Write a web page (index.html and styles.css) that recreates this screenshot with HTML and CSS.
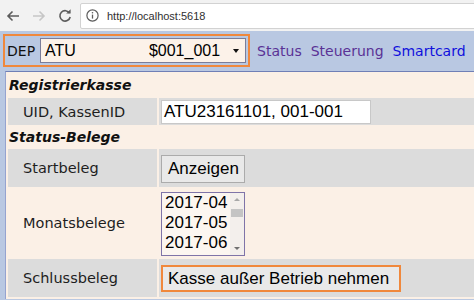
FILE: index.html
```
<!DOCTYPE html>
<html lang="de">
<head>
<meta charset="utf-8">
<title>Registrierkasse</title>
<link rel="stylesheet" href="styles.css">
</head>
<body>
<div class="chrome">
  <div class="cbtn">
    <svg width="14" height="12" viewBox="0 0 14 12"><path d="M13 6H2M6.5 1.5L2 6l4.5 4.5" fill="none" stroke="#5c5c5c" stroke-width="1.6"/></svg>
  </div>
  <div class="cbtn">
    <svg width="14" height="12" viewBox="0 0 14 12"><path d="M1 6h11M7.5 1.5L12 6l-4.5 4.5" fill="none" stroke="#c6c6c6" stroke-width="1.6"/></svg>
  </div>
  <div class="cbtn">
    <svg width="14" height="14" viewBox="0 0 14 14"><path d="M11.6 4.2A5.2 5.2 0 1 0 12.2 8" fill="none" stroke="#5c5c5c" stroke-width="1.6"/><path d="M8.2 4.6h4.4V0.2z" fill="#5c5c5c"/></svg>
  </div>
  <div class="omni">
    <svg width="13" height="13" viewBox="0 0 13 13"><circle cx="6.5" cy="6.5" r="5.6" fill="none" stroke="#5c5c5c" stroke-width="1.2"/><path d="M6.5 5.6v4" stroke="#5c5c5c" stroke-width="1.3"/><circle cx="6.5" cy="3.8" r="0.8" fill="#5c5c5c"/></svg>
    <span class="url">http://localhost:5618</span>
  </div>
</div>
<div class="nav">
  <div class="dep-box">
    <span class="dep">DEP</span>
    <div class="select">
      <span>ATU</span>
      <span class="sel-right">$001_001<span class="arrow"></span></span>
    </div>
  </div>
  <div class="links">
    <a class="link visited" href="#">Status</a>
    <a class="link visited" href="#">Steuerung</a>
    <a class="link" href="#">Smartcard</a>
  </div>
</div>
<div class="panel">
  <table class="grid">
    <tr class="sec first"><th colspan="2">Registrierkasse</th></tr>
    <tr class="gray r-uid">
      <td class="label">UID, KassenID</td>
      <td class="value"><div class="input">ATU23161101, 001-001</div></td>
    </tr>
    <tr class="sec second"><th colspan="2">Status-Belege</th></tr>
    <tr class="gray r-btn">
      <td class="label">Startbeleg</td>
      <td class="value"><div class="button btn-show">Anzeigen</div></td>
    </tr>
    <tr class="r-list">
      <td class="label">Monatsbelege</td>
      <td class="value">
        <div class="listbox">
          <div class="items">
            <div class="item">2017-04</div>
            <div class="item">2017-05</div>
            <div class="item">2017-06</div>
          </div>
          <div class="sbar">
            <span class="sb-up"></span>
            <span class="sb-thumb"></span>
            <span class="sb-down"></span>
          </div>
        </div>
      </td>
    </tr>
    <tr class="gray r-close">
      <td class="label">Schlussbeleg</td>
      <td class="value"><div class="button btn-close">Kasse außer Betrieb nehmen</div></td>
    </tr>
  </table>
</div>
</body>
</html>
```
FILE: styles.css
```
html, body {
  margin: 0;
  padding: 0;
  overflow: hidden;
}
body {
  width: 474px;
  height: 300px;
  background: #b9c8e2;
  font-family: "DejaVu Sans", Verdana, sans-serif;
  color: #1a1a1a;
}

/* browser chrome */
.chrome {
  height: 31px;
  background: #f2f2f2;
  display: flex;
  align-items: center;
}
.cbtn {
  width: 26px;
  height: 26px;
  display: flex;
  align-items: center;
  justify-content: center;
  flex: none;
}
.omni {
  margin-left: 2px;
  margin-right: -6px;
  flex: 1;
  height: 26px;
  box-sizing: border-box;
  background: #fff;
  border: 1px solid #d2d2d2;
  border-radius: 2px;
  display: flex;
  align-items: center;
  padding-left: 5px;
  gap: 8px;
}
.url {
  font-family: "Liberation Sans", Arial, sans-serif;
  font-size: 11px;
  color: #303030;
}

/* navigation */
.nav {
  height: 40px;
  box-sizing: border-box;
  padding: 3px 0 0 3px;
  display: flex;
  align-items: flex-start;
}
.dep-box {
  border: 2px solid #f0883c;
  padding: 2px;
  display: flex;
  align-items: center;
  gap: 5px;
}
.dep {
  font-size: 14px;
  color: #111;
}
.select {
  width: 206px;
  height: 25px;
  box-sizing: border-box;
  border: 1px solid #7b7d99;
  background: #fcf2e9;
  display: flex;
  align-items: center;
  justify-content: space-between;
  padding: 0 6px 0 4px;
  font-family: "Liberation Sans", Arial, sans-serif;
  font-size: 16px;
  color: #000;
}
.sel-right {
  display: flex;
  align-items: center;
}
.arrow {
  margin-left: 13px;
  width: 0;
  height: 0;
  border-left: 3px solid transparent;
  border-right: 3px solid transparent;
  border-top: 4px solid #111;
}
.links {
  display: flex;
  gap: 9px;
  margin-left: 7px;
  line-height: 34px;
}
.link {
  font-size: 14px;
  text-decoration: none;
  color: #1010dd;
}
.link.visited {
  color: #5a3296;
}

/* content panel */
.panel {
  margin-left: 5px;
  border-left: 1px solid #95a3cf;
  border-top: 1px solid #6f7fb6;
  background: #fbf0e6;
  width: 480px;
}
.grid {
  border-collapse: separate;
  border-spacing: 2px;
  width: 480px;
}
.grid td, .grid th {
  padding: 0;
}
.sec th {
  text-align: left;
  font-weight: bold;
  font-style: italic;
  font-size: 14px;
  color: #111;
  padding-left: 1px;
}
.sec.first th { height: 22px; }
.sec.second th { height: 20px; }
.gray td {
  background: #dcdcdc;
}
.label {
  width: 149px;
  box-sizing: border-box;
  padding-left: 15px !important;
  font-size: 14.5px;
  color: #1e1e1e;
  vertical-align: middle;
}
.value {
  padding-left: 2px !important;
  vertical-align: middle;
}
.r-uid td { height: 27px; }
.r-btn td { height: 38px; }
.r-list td { height: 68px; }
.r-close td { height: 38px; }

.input {
  width: 210px;
  height: 24px;
  box-sizing: border-box;
  background: #fff;
  border: 1px solid #c8c8c8;
  font-family: "Liberation Sans", Arial, sans-serif;
  font-size: 17px;
  line-height: 22px;
  padding-left: 2px;
  color: #000;
}
.button {
  box-sizing: border-box;
  background: #e9e9e9;
  font-family: "Liberation Sans", Arial, sans-serif;
  font-size: 17px;
  color: #000;
  display: flex;
  align-items: center;
}
.btn-show {
  width: 84px;
  height: 28px;
  border: 1px solid #ababab;
  padding-left: 6px;
  margin-top: 2px;
}
.btn-close {
  width: 240px;
  height: 27px;
  border: 2px solid #f0883c;
  padding-left: 5px;
  margin-top: 1px;
}
.listbox {
  width: 84px;
  height: 64px;
  box-sizing: border-box;
  border: 1px solid #7f74a8;
  background: #fcf6f0;
  display: flex;
  margin-top: 1px;
}
.items {
  flex: 1;
  padding-left: 3px;
  font-family: "Liberation Sans", Arial, sans-serif;
  font-size: 17px;
  line-height: 20px;
  color: #000;
}
.sbar {
  width: 14px;
  position: relative;
  background: #f3efec;
}
.sb-up, .sb-down {
  position: absolute;
  left: 4px;
  width: 0;
  height: 0;
  border-left: 3px solid transparent;
  border-right: 3px solid transparent;
}
.sb-up {
  top: 5px;
  border-bottom: 3px solid #a8a8a8;
}
.sb-down {
  bottom: 5px;
  border-top: 3px solid #707070;
}
.sb-thumb {
  position: absolute;
  left: 1px;
  width: 12px;
  top: 16px;
  height: 8px;
  background: #c4c4c4;
}
```
